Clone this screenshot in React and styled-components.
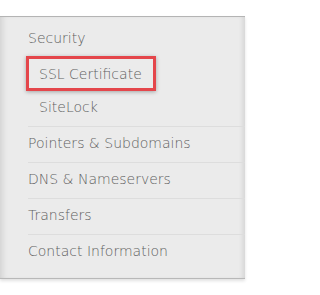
import React from "react";
import styled, { createGlobalStyle } from "styled-components";

const Global = createGlobalStyle`
    html, body {
        margin: 0;
        padding: 0;
        background: #ffffff;
    }
    body {
        font-family: "DejaVu Sans", "Noto Sans", sans-serif;
    }
`

const Page = styled.div`
    padding-top: 16px;
    width: 247px;
    height: 295px;
    box-sizing: border-box;
`

const Panel = styled.div`
    width: 245px;
    height: 263px;
    box-sizing: border-box;
    background: #ebebeb;
    border-top: 1px solid #b4b4b4;
    border-bottom: 1px solid #b8b8b8;
    box-shadow:
        inset 6px 0 6px -4px rgba(0, 0, 0, 0.12),
        inset -5px 0 5px -3px rgba(0, 0, 0, 0.10),
        0 2px 3px rgba(0, 0, 0, 0.12);
    padding-top: 5px;
`

const Group = styled.div`
    padding-bottom: 2px;
`

const Item = styled.div`
    position: relative;
    height: ${(p) => (p.$sub ? "33px" : "36px")};
    box-sizing: border-box;
    margin-left: 28px;
    padding-left: ${(p) => (p.$sub ? "11px" : "0")};
    padding-top: 7px;
    border-top: ${(p) => (p.$divider ? "1px solid #dddddd" : "none")};
    font-size: 14px;
    font-weight: 200;
    line-height: 18px;
    color: #5f5f5f;
    white-space: nowrap;
`

const Highlight = styled.div`
    position: absolute;
    left: -2px;
    top: -2px;
    width: 130px;
    height: 35px;
    box-sizing: border-box;
    border: 3px solid #e4464b;
    box-shadow: 0 1px 4px rgba(0, 0, 0, 0.3);
`

const rows = ["Pointers & Subdomains", "DNS & Nameservers", "Transfers", "Contact Information"];

export default function App() {
    return (
        <>
            <Global />
            <Page>
                <Panel>
                    <Group>
                        <Item>Security</Item>
                        <Item $sub>
                            <Highlight />
                            SSL Certificate
                        </Item>
                        <Item $sub>SiteLock</Item>
                    </Group>
                    {rows.map((r) => (
                        <Item key={r} $divider>{r}</Item>
                    ))}
                </Panel>
            </Page>
        </>
    )
}
